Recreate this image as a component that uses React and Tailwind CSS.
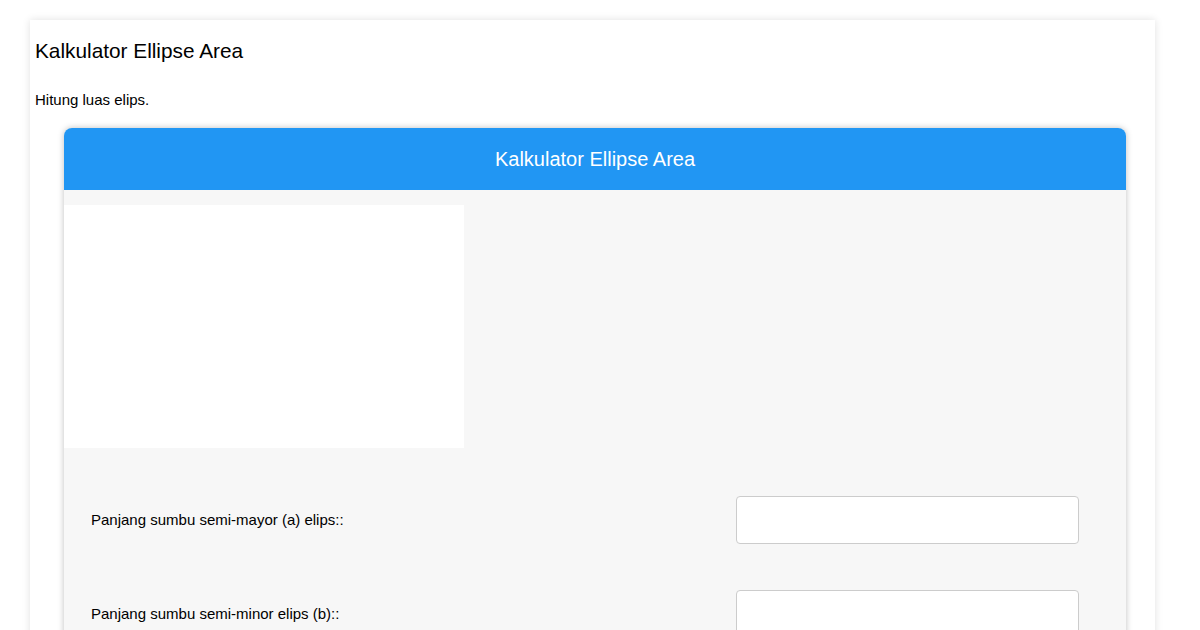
const fields = [
  { id: 'a', label: 'Panjang sumbu semi-mayor (a) elips::' },
  { id: 'b', label: 'Panjang sumbu semi-minor elips (b)::' },
]

export default function App() {
  return (
    <div className="h-[630px] overflow-y-scroll bg-white font-['Liberation_Sans',Arial,sans-serif] text-black [&::-webkit-scrollbar]:w-[15px] [&::-webkit-scrollbar-track]:bg-[#f1f1f1] [&::-webkit-scrollbar-thumb]:border-2 [&::-webkit-scrollbar-thumb]:border-solid [&::-webkit-scrollbar-thumb]:border-[#f1f1f1] [&::-webkit-scrollbar-thumb]:bg-[#c1c1c1] [&::-webkit-scrollbar-button]:block [&::-webkit-scrollbar-button]:h-[12px] [&::-webkit-scrollbar-button]:bg-[#f1f1f1]">
      <div className="min-h-[2200px] pt-5 pb-10">
        <div className="ml-[30px] w-[1125px] bg-white pb-10 shadow-[0_0_8px_rgba(0,0,0,0.12)]">
          <h2 className="pl-[5px] pt-[19px] text-[20.8px] leading-6">Kalkulator Ellipse Area</h2>
          <p className="mt-[28px] pl-[5px] text-[15px] leading-[17px]">Hitung luas elips.</p>

          <div className="mt-5 ml-[34px] w-[1062px] overflow-hidden rounded-lg bg-[#f7f7f7] shadow-[0_0_6px_rgba(0,0,0,0.25)]">
            <div className="flex h-[62px] items-center justify-center bg-[#2196f3] text-[20px] text-white">
              Kalkulator Ellipse Area
            </div>

            <div className="pt-[15px] pb-8">
              <div className="h-[243px] w-[400px] bg-white"></div>

              <div className="mt-[25px]">
                {fields.map((f) => (
                  <div key={f.id} className="flex items-center py-[23px] pl-[27px] pr-[47px]">
                    <label htmlFor={f.id} className="flex-1 text-[15px]">{f.label}</label>
                    <input
                      id={f.id}
                      type="text"
                      className="h-[48px] w-[343px] rounded border border-[#cccccc] bg-white px-3 text-[15px] outline-none"
                    />
                  </div>
                ))}
              </div>

              <div className="mt-6 flex justify-center">
                <button className="rounded bg-[#2196f3] px-6 py-3 text-[15px] text-white">Hitung</button>
              </div>
            </div>
          </div>
        </div>
      </div>
    </div>
  )
}
